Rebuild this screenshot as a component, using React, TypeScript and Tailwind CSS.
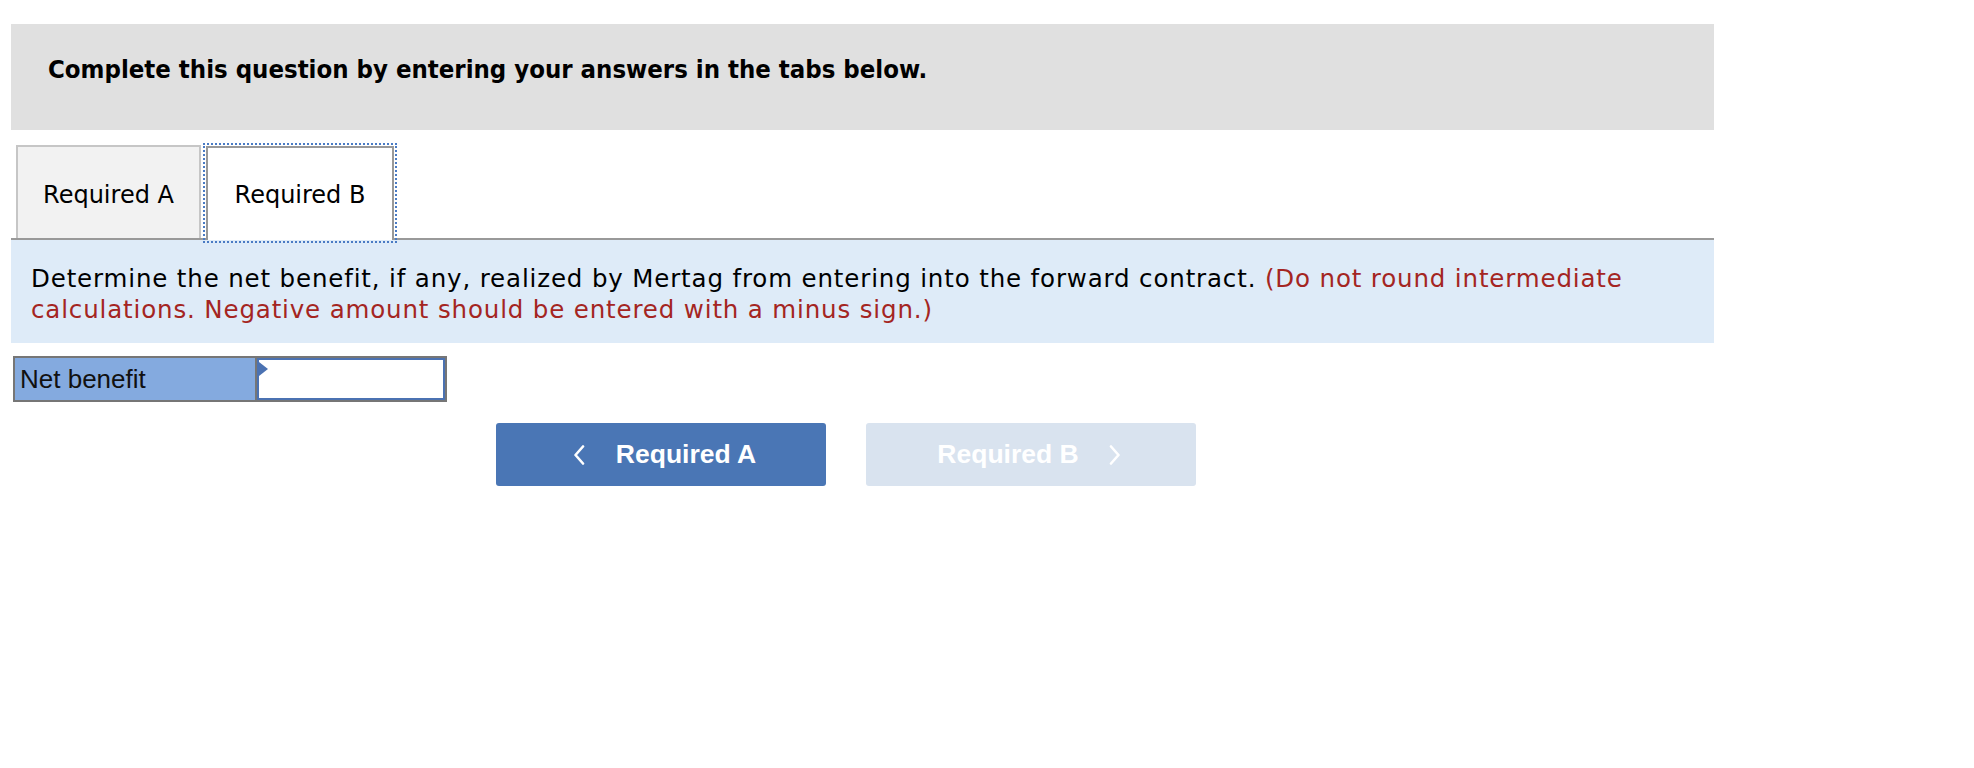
import React from "react";

const verdana = "font-['DejaVu_Sans','Verdana',sans-serif]";
const tahomaBold = "font-['DejaVu_Sans_Condensed','Tahoma',sans-serif]";
const arial = "font-['Liberation_Sans','Arial',sans-serif]";

function ChevronLeft() {
  return (
    <svg width="12" height="20" viewBox="0 0 12 20" fill="none">
      <polyline points="10,1.5 2.5,10 10,18.5" stroke="currentColor" strokeWidth="2.6" strokeLinecap="round" strokeLinejoin="round" />
    </svg>
  );
}

function ChevronRight() {
  return (
    <svg width="12" height="20" viewBox="0 0 12 20" fill="none">
      <polyline points="2,1.5 9.5,10 2,18.5" stroke="currentColor" strokeWidth="2.6" strokeLinecap="round" strokeLinejoin="round" />
    </svg>
  );
}

export default function App() {
  return (
    <div className="min-h-[768px] bg-white pt-[24px] pl-[11px]">
      <div className="w-[1703px]">
        {/* Instruction banner */}
        <div className="h-[106px] bg-[#e0e0e0] pl-[37px] pt-[33px]">
          <p className={`${tahomaBold} text-[25.5px] font-bold leading-none text-black`}>
            Complete this question by entering your answers in the tabs below.
          </p>
        </div>

        {/* Tabs */}
        <div className="mt-[15px] flex items-end border-b-2 border-[#999999] pl-[5px]">
          <div
            className={`${verdana} flex h-[93px] w-[185px] items-center justify-center border-2 border-b-0 border-[#c6c6c6] bg-[#f2f2f2] pt-[5px] text-[24px] text-black`}
          >
            Required A
          </div>
          <div
            className={`${verdana} relative -mb-[2px] ml-[5px] flex h-[94px] w-[188px] items-center justify-center border-2 border-b-0 border-[#999999] bg-white pt-[2px] text-[24px] text-black outline-2 outline-offset-[1px] outline-dotted outline-[#4a7bc4]`}
          >
            Required B
          </div>
        </div>

        {/* Question prompt */}
        <div className={`${verdana} h-[103px] bg-[#deebf8] pl-[20px] pt-[23px] text-[24.5px] leading-[31px] tracking-[0.85px]`}>
          <span className="text-black">
            Determine the net benefit, if any, realized by Mertag from entering into the forward contract.{" "}
          </span>
          <span className="text-[#a42522]">
            (Do not round intermediate
            <br />
            calculations. Negative amount should be entered with a minus sign.)
          </span>
        </div>

        {/* Answer row */}
        <div className="mt-[13px] ml-[2px] flex h-[46px]">
          <div
            className={`${arial} flex w-[244px] items-center border-2 border-[#767676] bg-[#84aadf] pl-[5px] text-[26px] text-[#111111]`}
          >
            Net benefit
          </div>
          <div className="relative w-[190px] border-2 border-l-0 border-[#767676]">
            <div className="h-full w-full border-2 border-[#4b72b2] bg-white" />
            <div className="absolute left-[2px] top-[4px] h-0 w-0 border-y-[7px] border-l-[9px] border-y-transparent border-l-[#4b72b2]" />
          </div>
        </div>

        {/* Navigation */}
        <div className="mt-[21px] ml-[485px] flex gap-[40px]">
          <button
            className={`${arial} flex h-[63px] w-[330px] items-center justify-center gap-[31px] rounded-[3px] bg-[#4a76b5] pl-[7px] text-[26.5px] font-bold text-white`}
          >
            <ChevronLeft />
            <span>Required A</span>
          </button>
          <button
            className={`${arial} flex h-[63px] w-[330px] items-center justify-center gap-[30px] rounded-[3px] bg-[#d9e3ef] pr-[4px] text-[26.5px] font-bold text-white`}
          >
            <span>Required B</span>
            <ChevronRight />
          </button>
        </div>
      </div>
    </div>
  );
}
